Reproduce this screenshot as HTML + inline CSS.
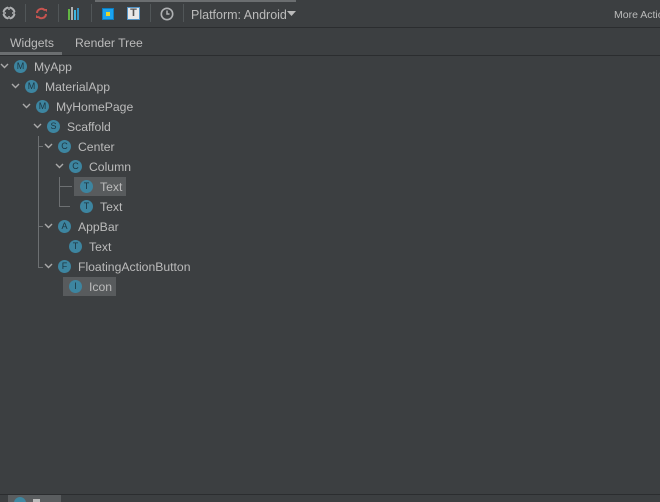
<!DOCTYPE html>
<html style="overflow:hidden"><head><style>
html,body{margin:0;padding:0}
#r{width:660px;height:502px;background:#3c3f41;font-family:"Liberation Sans",sans-serif;font-size:12px;color:#bbbbbb;position:relative;overflow:hidden}
.a{position:absolute}
.ic{position:absolute;width:13px;height:13px;border-radius:50%;background:#3d85a0;color:#1d3540;font-size:9px;line-height:13px;text-align:center}
.t{position:absolute;font-size:12.2px;line-height:14px}
.sep{position:absolute;top:4px;width:1px;height:18px;background:#515658}
</style></head><body><div id="r">
<div class="a" style="left:95px;top:0;width:201px;height:2px;background:#6b6e70"></div>
<div class="a" style="left:0;top:27px;width:660px;height:1px;background:#2b2d2f"></div>
<svg class="a" style="left:2px;top:6px" width="14" height="14"><circle cx="7" cy="7" r="5.5" fill="none" stroke="#afb1b3" stroke-width="2"/><path d="M7 0v4M7 10v4M0 7h4M10 7h4" stroke="#3c3f41" stroke-width="2"/><path d="M7 1v3M7 10v3M1 7h3M10 7h3" stroke="#afb1b3" stroke-width="1.5"/></svg>
<div class="sep" style="left:25px"></div>
<svg class="a" style="left:35px;top:7px" width="13" height="13"><path d="M2 6a4.5 4.5 0 0 1 8-2.5M11 7a4.5 4.5 0 0 1-8 2.5" fill="none" stroke="#c75450" stroke-width="2"/><path d="M8 2h4v3zM5 11H1V8z" fill="#c75450"/></svg>
<div class="sep" style="left:58px"></div>
<div class="a" style="left:68px;top:9px;width:2px;height:11px;background:#62b543"></div>
<div class="a" style="left:71px;top:7px;width:2px;height:13px;background:#afb1b3"></div>
<div class="a" style="left:74px;top:10px;width:2px;height:10px;background:#40b6e0"></div>
<div class="a" style="left:77px;top:8px;width:2px;height:12px;background:#3592c4"></div>
<div class="sep" style="left:91px"></div>
<div class="a" style="left:102px;top:8px;width:12px;height:12px;background:#1aa3f0;border:1px solid #0e7ec0;box-sizing:border-box"></div>
<div class="a" style="left:106px;top:12px;width:4px;height:4px;background:#e5d52e"></div>
<div class="a" style="left:127px;top:7px;width:13px;height:13px;background:#e8e8e8;border:1px solid #5294c7;box-sizing:border-box;color:#555;font-size:11px;line-height:11px;text-align:center;font-weight:bold">T</div>
<div class="sep" style="left:150px"></div>
<svg class="a" style="left:160px;top:7px" width="14" height="14"><circle cx="7" cy="7" r="5.7" fill="none" stroke="#afb1b3" stroke-width="1.6"/><path d="M7 3.5V7h2.5" fill="none" stroke="#afb1b3" stroke-width="1.5"/></svg>
<div class="sep" style="left:183px"></div>
<div class="t" style="left:191px;top:8px;font-size:12.5px">Platform: Android</div>
<svg class="a" style="left:287px;top:11px" width="10" height="6"><path d="M0 0h9L4.5 5z" fill="#bbbbbb"/></svg>
<div class="t" style="left:614px;top:8px;font-size:10.5px;white-space:nowrap">More Actions</div>
<div class="t" style="left:10px;top:36px">Widgets</div>
<div class="t" style="left:75px;top:36px">Render Tree</div>
<div class="a" style="left:0;top:52px;width:62px;height:3px;background:#6b6e70"></div>
<div class="a" style="left:0;top:55px;width:660px;height:1px;background:#2b2d2f"></div>
<div class="a" style="left:74px;top:177px;width:52px;height:19px;background:#585b5d"></div>
<div class="a" style="left:63px;top:277px;width:53px;height:19px;background:#585b5d"></div>
<div class="a" style="left:38px;top:136px;width:1px;height:132px;background:#6d7072"></div>
<div class="a" style="left:38px;top:146px;width:5px;height:1px;background:#6d7072"></div>
<div class="a" style="left:38px;top:226px;width:5px;height:1px;background:#6d7072"></div>
<div class="a" style="left:38px;top:267px;width:5px;height:1px;background:#6d7072"></div>
<div class="a" style="left:59px;top:177px;width:1px;height:30px;background:#6d7072"></div>
<div class="a" style="left:59px;top:186px;width:13px;height:1px;background:#6d7072"></div>
<div class="a" style="left:59px;top:206px;width:11px;height:1px;background:#6d7072"></div>
<svg class="a" style="left:0;top:0" width="120" height="300" fill="none" stroke="#aaaaaa" stroke-width="1.4">
<path d="M1 64l3.5 3.5L8 64M12 84l3.5 3.5L19 84M23 104l3.5 3.5L30 104M34 124l3.5 3.5L41 124M45 144l3.5 3.5L52 144M56 164l3.5 3.5L63 164M45 224l3.5 3.5L52 224M45 264l3.5 3.5L52 264"/>
</svg>
<div class="ic" style="left:14px;top:60px">M</div><div class="t" style="left:34px;top:60px">MyApp</div>
<div class="ic" style="left:25px;top:80px">M</div><div class="t" style="left:45px;top:80px">MaterialApp</div>
<div class="ic" style="left:36px;top:100px">M</div><div class="t" style="left:56px;top:100px">MyHomePage</div>
<div class="ic" style="left:47px;top:120px">S</div><div class="t" style="left:67px;top:120px">Scaffold</div>
<div class="ic" style="left:58px;top:140px">C</div><div class="t" style="left:78px;top:140px">Center</div>
<div class="ic" style="left:69px;top:160px">C</div><div class="t" style="left:89px;top:160px">Column</div>
<div class="ic" style="left:80px;top:180px">T</div><div class="t" style="left:100px;top:180px">Text</div>
<div class="ic" style="left:80px;top:200px">T</div><div class="t" style="left:100px;top:200px">Text</div>
<div class="ic" style="left:58px;top:220px">A</div><div class="t" style="left:78px;top:220px">AppBar</div>
<div class="ic" style="left:69px;top:240px">T</div><div class="t" style="left:89px;top:240px">Text</div>
<div class="ic" style="left:58px;top:260px">F</div><div class="t" style="left:78px;top:260px">FloatingActionButton</div>
<div class="ic" style="left:69px;top:280px">I</div><div class="t" style="left:89px;top:280px">Icon</div>
<div class="a" style="left:0;top:494px;width:660px;height:1px;background:#2b2d2f"></div>
<div class="a" style="left:8px;top:495px;width:53px;height:7px;background:#5a5d5f;overflow:hidden">
<div class="a" style="left:6px;top:2px;width:12px;height:12px;border-radius:50%;background:#3f87a0"></div>
<div class="a" style="left:25px;top:4px;width:7px;height:3px;background:#bbbbbb"></div>
</div>
</div></body></html>
